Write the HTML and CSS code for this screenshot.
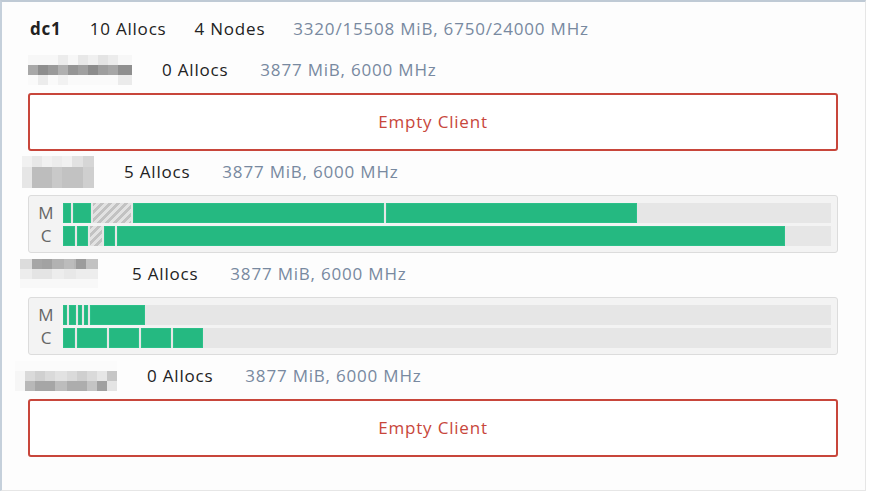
FILE: index.html
```html
<!DOCTYPE html>
<html lang="en">
<head>
  <meta charset="UTF-8">
  <meta name="viewport" content="width=device-width, initial-scale=1.0">
  <title>Datacenter dc1</title>
  <link rel="stylesheet" href="styles.css">
</head>
<body>

  <div class="dc-panel">
    <div class="dc-header">
      <strong class="dc-name">dc1</strong>
      <span>10 Allocs</span>
      <span>4 Nodes</span>
      <span class="stats">3320/15508 MiB, 6750/24000 MHz</span>
    </div>

    <!-- node 1 -->
    <div class="node-row">
      <svg class="node-name name-a" width="104" height="30" viewBox="0 0 104 30">
        <rect x="0" y="0" width="104" height="10" fill="#f7f7f7"/>
        <rect x="30" y="0" width="10" height="10" fill="#ececec"/>
        <rect x="50" y="0" width="10" height="10" fill="#e8e8e8"/>
        <rect x="60" y="0" width="10" height="10" fill="#f0f0f0"/>
        <rect x="70" y="0" width="10" height="10" fill="#e4e4e4"/>
        <rect x="80" y="0" width="10" height="10" fill="#ececec"/>
        <rect x="0" y="10" width="10" height="10" fill="#a8a8a8"/>
        <rect x="10" y="10" width="10" height="10" fill="#8e8e8e"/>
        <rect x="20" y="10" width="10" height="10" fill="#9a9a9a"/>
        <rect x="30" y="10" width="10" height="10" fill="#b0b0b0"/>
        <rect x="40" y="10" width="10" height="10" fill="#959595"/>
        <rect x="50" y="10" width="10" height="10" fill="#a0a0a0"/>
        <rect x="60" y="10" width="10" height="10" fill="#8c8c8c"/>
        <rect x="70" y="10" width="10" height="10" fill="#9e9e9e"/>
        <rect x="80" y="10" width="10" height="10" fill="#a6a6a6"/>
        <rect x="90" y="10" width="14" height="10" fill="#8f8f8f"/>
        <rect x="0" y="20" width="104" height="10" fill="#fafafa"/>
        <rect x="10" y="20" width="10" height="10" fill="#ececec"/>
        <rect x="30" y="20" width="10" height="10" fill="#f2f2f2"/>
        <rect x="90" y="20" width="14" height="10" fill="#ebebeb"/>
      </svg>
      <span>0 Allocs</span>
      <span class="stats">3877 MiB, 6000 MHz</span>
    </div>
    <div class="empty-client">Empty Client</div>

    <!-- node 2 -->
    <div class="node-row">
      <svg class="node-name name-b" width="72" height="32" viewBox="0 0 72 32">
        <rect x="0" y="0" width="72" height="11" fill="#f1f1f1"/>
        <rect x="10" y="0" width="10" height="11" fill="#e8e8e8"/>
        <rect x="30" y="0" width="10" height="11" fill="#ececec"/>
        <rect x="50" y="0" width="11" height="11" fill="#e2e2e2"/>
        <rect x="61" y="0" width="11" height="11" fill="#d6d6d6"/>
        <rect x="0" y="11" width="72" height="21" fill="#d2d2d2"/>
        <rect x="0" y="11" width="10" height="21" fill="#e6e6e6"/>
        <rect x="10" y="11" width="20" height="21" fill="#bdbdbd"/>
        <rect x="30" y="11" width="10" height="21" fill="#c9c9c9"/>
        <rect x="40" y="11" width="21" height="21" fill="#c2c2c2"/>
        <rect x="61" y="11" width="11" height="21" fill="#cfcfcf"/>
      </svg>
      <span>5 Allocs</span>
      <span class="stats">3877 MiB, 6000 MHz</span>
    </div>
    <div class="usage">
      <div class="usage-labels">
        <span>M</span>
        <span>C</span>
      </div>
      <div class="usage-bars">
        <div class="track">
          <div class="seg" style="width: 8px"></div>
          <div class="seg" style="width: 18px"></div>
          <div class="seg pending" style="width: 38px"></div>
          <div class="seg" style="width: 251px"></div>
          <div class="seg" style="width: 251px"></div>
        </div>
        <div class="track">
          <div class="seg" style="width: 12px"></div>
          <div class="seg" style="width: 11px"></div>
          <div class="seg pending" style="width: 12px"></div>
          <div class="seg" style="width: 11px"></div>
          <div class="seg" style="width: 668px"></div>
        </div>
      </div>
    </div>

    <!-- node 3 -->
    <div class="node-row">
      <svg class="node-name name-c" width="82" height="29" viewBox="0 0 82 29">
        <rect x="0" y="0" width="78" height="10" fill="#b6b6b6"/>
        <rect x="0" y="0" width="12" height="10" fill="#dcdcdc"/>
        <rect x="12" y="0" width="10" height="10" fill="#a6a6a6"/>
        <rect x="22" y="0" width="10" height="10" fill="#a2a2a2"/>
        <rect x="32" y="0" width="12" height="10" fill="#b2b2b2"/>
        <rect x="44" y="0" width="10" height="10" fill="#bcbcbc"/>
        <rect x="56" y="0" width="10" height="10" fill="#9c9c9c"/>
        <rect x="66" y="0" width="12" height="10" fill="#c2c2c2"/>
        <rect x="0" y="10" width="78" height="19" fill="#ededed"/>
        <rect x="12" y="10" width="20" height="10" fill="#e4e4e4"/>
        <rect x="44" y="10" width="12" height="10" fill="#e8e8e8"/>
        <rect x="0" y="20" width="78" height="9" fill="#f8f8f8"/>
      </svg>
      <span>5 Allocs</span>
      <span class="stats">3877 MiB, 6000 MHz</span>
    </div>
    <div class="usage">
      <div class="usage-labels">
        <span>M</span>
        <span>C</span>
      </div>
      <div class="usage-bars">
        <div class="track">
          <div class="seg" style="width: 4px"></div>
          <div class="seg" style="width: 7px"></div>
          <div class="seg" style="width: 4px"></div>
          <div class="seg" style="width: 4px"></div>
          <div class="seg" style="width: 55px"></div>
        </div>
        <div class="track">
          <div class="seg" style="width: 12px"></div>
          <div class="seg" style="width: 30px"></div>
          <div class="seg" style="width: 30px"></div>
          <div class="seg" style="width: 30px"></div>
          <div class="seg" style="width: 30px"></div>
        </div>
      </div>
    </div>

    <!-- node 4 -->
    <div class="node-row">
      <svg class="node-name name-d" width="102" height="30" viewBox="0 0 102 30">
        <rect x="0" y="0" width="102" height="10" fill="#fbfbfb"/>
        <rect x="10" y="10" width="92" height="10" fill="#dadada"/>
        <rect x="20" y="10" width="10" height="10" fill="#d0d0d0"/>
        <rect x="40" y="10" width="12" height="10" fill="#e2e2e2"/>
        <rect x="62" y="10" width="10" height="10" fill="#cfcfcf"/>
        <rect x="82" y="10" width="10" height="10" fill="#e6e6e6"/>
        <rect x="92" y="10" width="10" height="10" fill="#c6c6c6"/>
        <rect x="0" y="10" width="10" height="20" fill="#f6f6f6"/>
        <rect x="10" y="20" width="92" height="10" fill="#b8b8b8"/>
        <rect x="20" y="20" width="20" height="10" fill="#a6a6a6"/>
        <rect x="40" y="20" width="12" height="10" fill="#bdbdbd"/>
        <rect x="52" y="20" width="20" height="10" fill="#adadad"/>
        <rect x="72" y="20" width="10" height="10" fill="#c4c4c4"/>
        <rect x="82" y="20" width="10" height="10" fill="#a0a0a0"/>
        <rect x="92" y="20" width="10" height="10" fill="#e4e4e4"/>
      </svg>
      <span>0 Allocs</span>
      <span class="stats">3877 MiB, 6000 MHz</span>
    </div>
    <div class="empty-client">Empty Client</div>
  </div>

</body>
</html>
```

FILE: styles.css
```css
body {
  font-family: 'Open Sans', 'Noto Sans', sans-serif;
  font-size: 17px;
  letter-spacing: 0.8px;
  color: #222;
  background-color: #fff;
  margin: 0;
  padding: 0;
}

.dc-panel {
  box-sizing: border-box;
  width: 866px;
  height: 491px;
  padding: 6px 27px 0 26px;
  background-color: #fdfdfd;
  border: 1px solid #e6e6e6;
  border-top: 2px solid #bfcad5;
  border-left: 2px solid #c5d0db;
}

.dc-header,
.node-row {
  display: flex;
  align-items: center;
  white-space: nowrap;
}

.dc-header {
  height: 41px;
  gap: 28px;
  padding-left: 2px;
}

.dc-name {
  font-weight: bold;
}

.node-row {
  box-sizing: border-box;
  height: 44px;
  gap: 30px;
  padding-bottom: 3px;
}

.stats {
  color: #7889a0;
}

.node-row .stats {
  margin-left: 2px;
}

.node-name {
  display: block;
  flex-shrink: 0;
}

.name-b {
  margin-left: -6px;
}

.name-c {
  margin-left: -8px;
}

.name-d {
  margin-left: -13px;
}

.empty-client {
  box-sizing: border-box;
  height: 58px;
  display: flex;
  align-items: center;
  justify-content: center;
  padding-bottom: 2px;
  color: #c8463b;
  border: 2px solid #c8463b;
  border-radius: 3px;
  background-color: #fff;
}

.usage {
  box-sizing: border-box;
  height: 58px;
  display: flex;
  align-items: center;
  gap: 7px;
  padding: 0 6px 0 7px;
  background-color: #f3f3f3;
  border: 1px solid #dcdcdc;
  border-radius: 3px;
}

.usage-labels {
  width: 20px;
  display: flex;
  flex-direction: column;
  gap: 3px;
  color: #666;
  font-size: 17px;
  letter-spacing: 0;
}

.usage-labels span {
  height: 20px;
  line-height: 20px;
  text-align: center;
}

.usage-bars {
  flex: 1;
  display: flex;
  flex-direction: column;
  gap: 3px;
}

.track {
  height: 20px;
  display: flex;
  gap: 2px;
  background-color: #e6e6e6;
}

.seg {
  flex-shrink: 0;
  height: 100%;
  background-color: #25b981;
  box-shadow: inset 0 0 0 1px #2cc089;
}

.seg.pending {
  box-shadow: none;
  background: repeating-linear-gradient(135deg, #c2c2c2 0 2.5px, #e2e2e2 2.5px 5.6px);
}
```
